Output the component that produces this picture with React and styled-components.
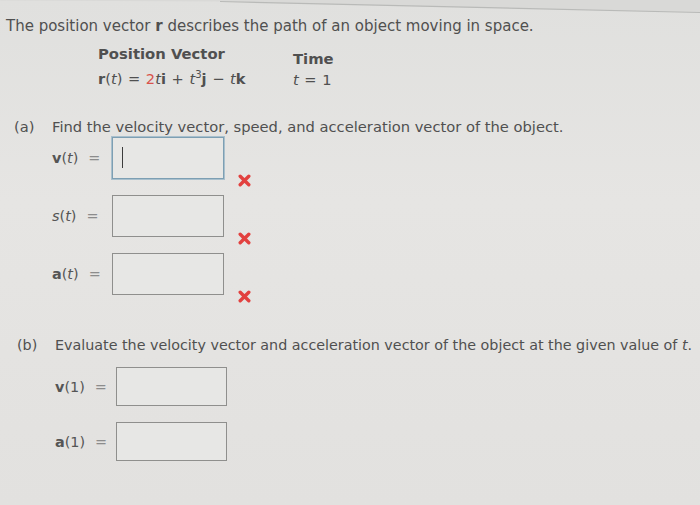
import styled, { createGlobalStyle } from "styled-components";

const GlobalStyle = createGlobalStyle`
  html, body {
    margin: 0;
    padding: 0;
    background: #e3e2e0;
  }
  body {
    font-family: "DejaVu Sans", Verdana, sans-serif;
    color: #505050;
  }
`;

const Page = styled.div`
  position: relative;
  width: 700px;
  height: 505px;
  overflow: hidden;
  background: linear-gradient(180deg, #e0e0de 0%, #e6e5e3 40%, #e2e1df 100%);
  padding: 16px 0 0 6px;
  box-sizing: border-box;
`;

// the edge of the screen above the page, slightly tilted in the photo
const ScreenEdge = styled.svg`
  position: absolute;
  top: 0;
  left: 0;
`;

const Intro = styled.p`
  margin: 0;
  font-size: 15px;
  line-height: 20px;
`;

const GivenTable = styled.div`
  display: grid;
  grid-template-columns: 195px auto;
  row-gap: 2px;
  margin: 9px 0 0 92px;
`;

const ColHead = styled.div`
  font-weight: bold;
  font-size: 14.8px;
  padding-top: ${(p) => p.$drop || 0}px;
`;

const MathCell = styled.div`
  font-size: 14.6px;
  word-spacing: 1px;
  padding-top: ${(p) => p.$drop || 0}px;
`;

const Red = styled.span`
  color: #d9534b;
`;

const Sup = styled.sup`
  font-size: 10px;
`;

const Part = styled.p`
  margin: ${(p) => p.$top}px 0 0 ${(p) => p.$left}px;
  font-size: ${(p) => p.$size}px;
  line-height: 18px;
`;

const Letter = styled.span`
  display: inline-block;
  width: 38px;
`;

const AnswerList = styled.div`
  display: flex;
  flex-direction: column;
  gap: ${(p) => p.$gap}px;
  margin: ${(p) => p.$top}px 0 0 ${(p) => p.$left}px;
`;

const Row = styled.div`
  display: flex;
  align-items: flex-start;
  height: ${(p) => p.$h}px;
`;

const Label = styled.div`
  width: ${(p) => p.$w}px;
  height: 100%;
  display: flex;
  align-items: center;
  font-size: 14.4px;
  color: #555;
`;

const Eq = styled.span`
  margin-left: 10px;
  color: #8c8c8c;
`;

const Box = styled.div`
  width: ${(p) => p.$w}px;
  height: 100%;
  box-sizing: border-box;
  border: 1px solid ${(p) => (p.$focused ? "#7d9fb3" : "#8f8f8d")};
  box-shadow: ${(p) => (p.$focused ? "0 0 0 1px #a9c0cd" : "none")};
  background: #e7e7e5;
  position: relative;
`;

const Caret = styled.div`
  position: absolute;
  left: 9px;
  top: 9px;
  width: 1px;
  height: 21px;
  background: #3c3c3c;
`;

const Mark = styled.svg`
  margin: 37px 0 0 14px;
  flex: none;
`;

function WrongMark() {
  return (
    <Mark width="13" height="13" viewBox="0 0 13 13">
      <path d="M2.2 2.2 L10.8 10.8 M10.8 2.2 L2.2 10.8" stroke="#e2413f" strokeWidth="3.4" strokeLinecap="round" />
    </Mark>
  );
}

const partA = [
  { label: <><b>v</b>(<i>t</i>)</>, focused: true },
  { label: <><i>s</i>(<i>t</i>)</> },
  { label: <><b>a</b>(<i>t</i>)</> },
];

const partB = [
  { label: <><b>v</b>(1)</> },
  { label: <><b>a</b>(1)</> },
];

export default function App() {
  return (
    <Page>
      <GlobalStyle />
      <ScreenEdge width="700" height="16" viewBox="0 0 700 16">
        <path d="M0 0 L700 0 L700 12.5 L220 1.5 L0 0.5 Z" fill="#d9d9d7" />
        <path d="M220 1.5 L700 12.5" stroke="#b9bab8" strokeWidth="1.2" />
      </ScreenEdge>

      <Intro>
        The position vector <b>r</b> describes the path of an object moving in space.
      </Intro>

      <GivenTable>
        <ColHead>Position Vector</ColHead>
        <ColHead $drop={5}>Time</ColHead>
        <MathCell>
          <b>r</b>(<i>t</i>) = <Red>2</Red><i>t</i><b>i</b> + <i>t</i><Sup>3</Sup><b>j</b> − <i>t</i><b>k</b>
        </MathCell>
        <MathCell $drop={2}>
          <i>t</i> = 1
        </MathCell>
      </GivenTable>

      <Part $top={30} $left={8} $size={14.7}>
        <Letter>(a)</Letter>Find the velocity vector, speed, and acceleration vector of the object.
      </Part>

      <AnswerList $top={1} $left={46} $gap={16}>
        {partA.map((r, i) => (
          <Row key={i} $h={42}>
            <Label $w={60}>
              {r.label}
              <Eq>=</Eq>
            </Label>
            <Box $w={112} $focused={r.focused}>{r.focused && <Caret />}</Box>
            <WrongMark />
          </Row>
        ))}
      </AnswerList>

      <Part $top={41} $left={11} $size={14.3}>
        <Letter>(b)</Letter>Evaluate the velocity vector and acceleration vector of the object at the given value of <i>t</i>.
      </Part>

      <AnswerList $top={13} $left={49} $gap={16}>
        {partB.map((r, i) => (
          <Row key={i} $h={39}>
            <Label $w={61}>
              {r.label}
              <Eq>=</Eq>
            </Label>
            <Box $w={111} />
          </Row>
        ))}
      </AnswerList>
    </Page>
  );
}
